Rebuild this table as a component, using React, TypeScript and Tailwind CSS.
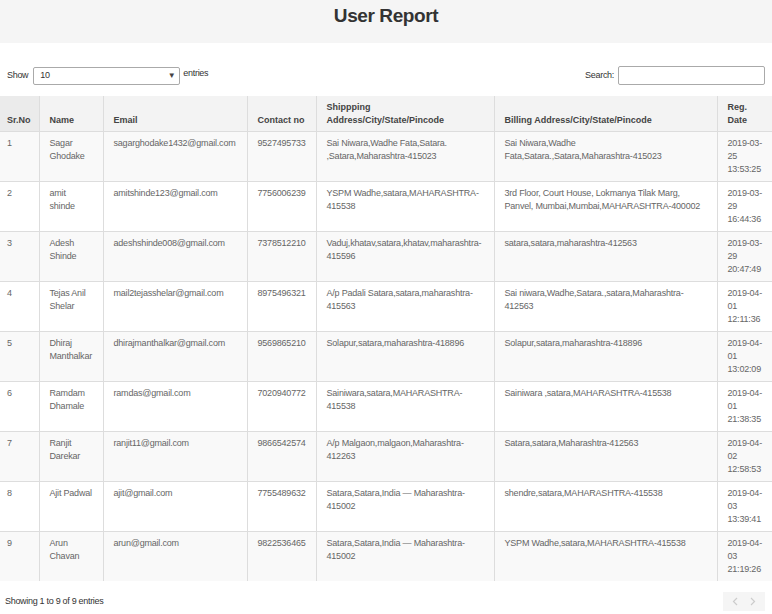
import React from 'react';

interface UserRow {
  id: number;
  name: string;
  email: string;
  contact: string;
  shipping: React.ReactNode;
  billing: React.ReactNode;
  date: string;
  time: string;
}

const users: UserRow[] = [
  {
    id: 1, name: 'Sagar Ghodake', email: 'sagarghodake1432@gmail.com', contact: '9527495733',
    shipping: 'Sai Niwara,Wadhe Fata,Satara. ,Satara,Maharashtra-415023',
    billing: <>Sai Niwara,Wadhe <span className="whitespace-nowrap">Fata,Satara.,Satara,Maharashtra-415023</span></>,
    date: '2019-03-25', time: '13:53:25',
  },
  { id: 2, name: 'amit shinde', email: 'amitshinde123@gmail.com', contact: '7756006239', shipping: 'YSPM Wadhe,satara,MAHARASHTRA-415538', billing: '3rd Floor, Court House, Lokmanya Tilak Marg, Panvel, Mumbai,Mumbai,MAHARASHTRA-400002', date: '2019-03-29', time: '16:44:36' },
  { id: 3, name: 'Adesh Shinde', email: 'adeshshinde008@gmail.com', contact: '7378512210', shipping: 'Vaduj,khatav,satara,khatav,maharashtra-415596', billing: 'satara,satara,maharashtra-412563', date: '2019-03-29', time: '20:47:49' },
  { id: 4, name: 'Tejas Anil Shelar', email: 'mail2tejasshelar@gmail.com', contact: '8975496321', shipping: 'A/p Padali Satara,satara,maharashtra-415563', billing: 'Sai niwara,Wadhe,Satara.,satara,Maharashtra-412563', date: '2019-04-01', time: '12:11:36' },
  { id: 5, name: 'Dhiraj Manthalkar', email: 'dhirajmanthalkar@gmail.com', contact: '9569865210', shipping: 'Solapur,satara,maharashtra-418896', billing: 'Solapur,satara,maharashtra-418896', date: '2019-04-01', time: '13:02:09' },
  { id: 6, name: 'Ramdam Dhamale', email: 'ramdas@gmail.com', contact: '7020940772', shipping: 'Sainiwara,satara,MAHARASHTRA-415538', billing: 'Sainiwara ,satara,MAHARASHTRA-415538', date: '2019-04-01', time: '21:38:35' },
  { id: 7, name: 'Ranjit Darekar', email: 'ranjit11@gmail.com', contact: '9866542574', shipping: 'A/p Malgaon,malgaon,Maharashtra-412263', billing: 'Satara,satara,Maharashtra-412563', date: '2019-04-02', time: '12:58:53' },
  { id: 8, name: 'Ajit Padwal', email: 'ajit@gmail.com', contact: '7755489632', shipping: 'Satara,Satara,India \u2014 Maharashtra-415002', billing: 'shendre,satara,MAHARASHTRA-415538', date: '2019-04-03', time: '13:39:41' },
  { id: 9, name: 'Arun Chavan', email: 'arun@gmail.com', contact: '9822536465', shipping: 'Satara,Satara,India \u2014 Maharashtra-415002', billing: 'YSPM Wadhe,satara,MAHARASHTRA-415538', date: '2019-04-03', time: '21:19:26' },
];

const font = { fontFamily: '"Liberation Sans", Arial, sans-serif' };

export default function App() {
  return (
    <div className="w-[772px] h-[614px] bg-white overflow-hidden" style={font}>
      {/* Title bar */}
      <div className="h-[43px] bg-[#f5f5f5] flex justify-center pt-[4px]">
        <h1 className="text-[19px] font-bold text-[#333] tracking-[-0.4px] leading-[24px]">User Report</h1>
      </div>

      {/* Controls */}
      <div className="flex items-center justify-between mt-[23px] pl-[7px] pr-[7px] text-[9px] text-[#333] tracking-[-0.3px]">
        <div className="flex items-center">
          <span>Show</span>
          <div className="ml-[5px] w-[147px] h-[18px] border border-[#aaa] rounded-[2px] flex items-center justify-between pl-[6px] pr-[4px]">
            <span>10</span>
            <span className="text-[8px] text-[#444]">▼</span>
          </div>
          <span className="ml-[3px] -mt-[3px]">entries</span>
        </div>
        <div className="flex items-center">
          <span>Search:</span>
          <div className="ml-[4px] w-[147px] h-[19px] border border-[#aaa] rounded-[2px]" />
        </div>
      </div>

      {/* Table */}
      <table className="mt-[11px] w-[772px] table-fixed border-collapse text-[9px] leading-[13px] tracking-[-0.2px]">
        <colgroup>
          <col className="w-[39px]" />
          <col className="w-[64px]" />
          <col className="w-[144px]" />
          <col className="w-[69px]" />
          <col className="w-[178px]" />
          <col className="w-[223px]" />
          <col className="w-[55px]" />
        </colgroup>
        <thead>
          <tr className="h-[35px] bg-[#f3f3f3] text-[#444] font-bold text-left tracking-normal">
            <th className="align-bottom pl-[7px] pr-[4px] pb-[4px] bg-[#ebebeb]">Sr.No</th>
            <th className="align-bottom px-[10px] pb-[4px] border-l border-[#ddd]">Name</th>
            <th className="align-bottom px-[10px] pb-[4px] border-l border-[#ddd]">Email</th>
            <th className="align-bottom pl-[10px] pr-[4px] pb-[4px] border-l border-[#ddd]">Contact no</th>
            <th className="align-bottom px-[10px] pb-[4px] border-l border-[#ddd]">Shippping Address/City/State/Pincode</th>
            <th className="align-bottom px-[10px] pb-[4px] border-l border-[#ddd]">Billing Address/City/State/Pincode</th>
            <th className="align-bottom pl-[10px] pr-[10px] pb-[4px] border-l border-[#ddd]">Reg. Date</th>
          </tr>
        </thead>
        <tbody className="text-[#666]">
          {users.map((u, i) => (
            <tr
              key={u.id}
              className={`h-[50px] border-t border-[#ddd] ${i % 2 === 0 ? 'bg-[#f9f9f9]' : 'bg-white'}`}
            >
              <td className="align-top pt-[5px] pl-[7px]">{u.id}</td>
              <td className="align-top pt-[5px] px-[10px] border-l border-[#ddd]">{u.name}</td>
              <td className="align-top pt-[5px] px-[10px] border-l border-[#ddd]">{u.email}</td>
              <td className="align-top pt-[5px] px-[10px] border-l border-[#ddd]">{u.contact}</td>
              <td className="align-top pt-[5px] px-[10px] border-l border-[#ddd]">{u.shipping}</td>
              <td className="align-top pt-[5px] px-[10px] border-l border-[#ddd]">{u.billing}</td>
              <td className="align-top pt-[5px] pb-[5px] pl-[10px] pr-[4px] border-l border-[#ddd]">
                {u.date} {u.time}
              </td>
            </tr>
          ))}
        </tbody>
      </table>

      {/* Footer */}
      <div className="flex items-center justify-between mt-[11px] pl-[5px] pr-[7px]">
        <span className="text-[9px] text-[#333] tracking-[-0.3px] mt-[1px]">Showing 1 to 9 of 9 entries</span>
        <div className="w-[42px] h-[19px] bg-[#f5f5f5] flex items-center justify-center gap-[12px] text-[#ccc]">
          <svg width="6" height="9" viewBox="0 0 6 9" fill="none" stroke="currentColor" strokeWidth="1.2">
            <path d="M5 1 L1.5 4.5 L5 8" />
          </svg>
          <svg width="6" height="9" viewBox="0 0 6 9" fill="none" stroke="currentColor" strokeWidth="1.2">
            <path d="M1 1 L4.5 4.5 L1 8" />
          </svg>
        </div>
      </div>
    </div>
  );
}
